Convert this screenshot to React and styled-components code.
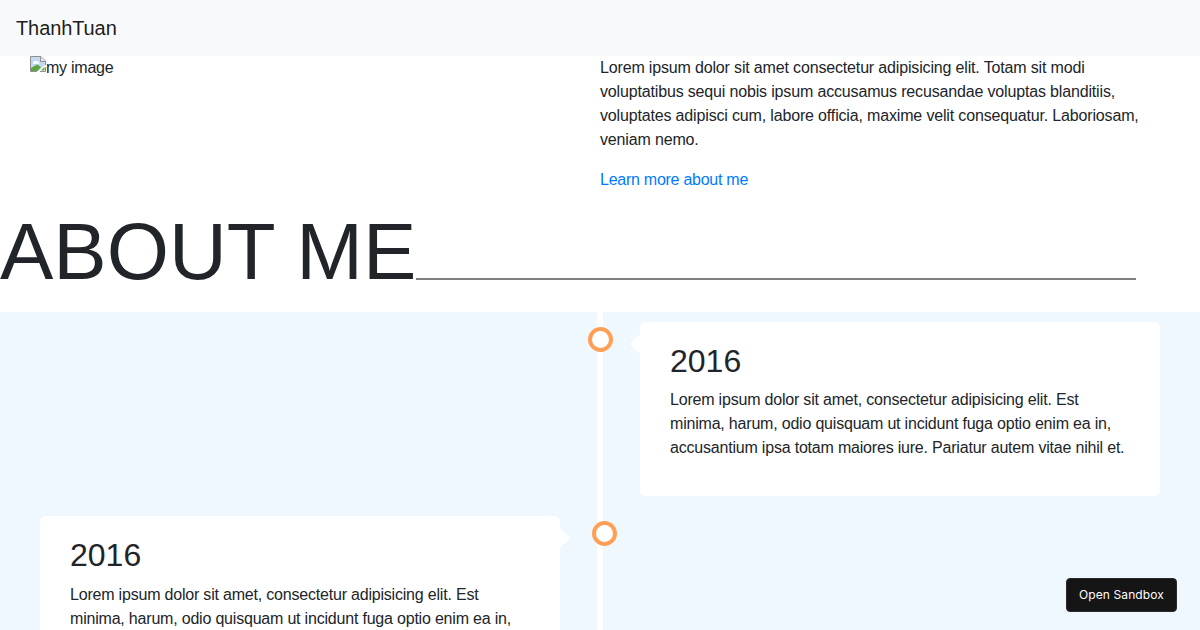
import React from 'react';
import styled, { createGlobalStyle } from 'styled-components';

const GlobalStyle = createGlobalStyle`
  *, *::before, *::after { box-sizing: border-box; }
  body {
    margin: 0;
    font-family: "Liberation Sans", Arial, sans-serif;
    font-size: 16px;
    line-height: 1.5;
    color: #212529;
    background: #fff;
  }
`

const Navbar = styled.nav`
  height: 56px;
  padding: 0 16px;
  display: flex;
  align-items: center;
  background: #f8f9fa;
`
const Brand = styled.a`
  font-size: 20px;
  letter-spacing: -0.1px;
  color: rgba(0, 0, 0, 0.9);
`
const IntroRow = styled.section`
  display: grid;
  grid-template-columns: 1fr 1fr;
`
const ImageCol = styled.div`
  padding-left: 30px;
`
const BrokenImage = styled.span`
  display: flex;
  align-items: flex-start;
  height: 24px;
  letter-spacing: -0.25px;

  svg {
    flex: none;
  }
`
const TextCol = styled.div`
  padding-right: 30px;
`
const Paragraph = styled.p`
  margin: 0 0 16px;
  letter-spacing: -0.16px;
`
const CardText = styled(Paragraph)`
  letter-spacing: -0.2px;
`
const LearnMore = styled.a`
  display: block;
  letter-spacing: -0.26px;
  color: #007bff;
`
const Heading = styled.h1`
  margin: 0;
  height: 120px;
  display: flex;
  align-items: center;
  font-size: 80px;
  font-weight: 400;
  line-height: 1.2;
  white-space: nowrap;

  &::after {
    content: '';
    width: 720px;
    height: 2px;
    margin-top: 54px;
    background: #7f7f7f;
  }
`
const Timeline = styled.section`
  position: relative;
  background: #f0f8ff;

  &::before {
    content: '';
    position: absolute;
    top: 0;
    bottom: 0;
    left: 597px;
    width: 6px;
    background: #fff;
  }
`
const Entry = styled.article`
  position: relative;
  width: 50%;
  padding: 10px 40px;
  margin-left: ${props => (props.$side === 'right' ? '50%' : '0')};

  &::before {
    content: '';
    position: absolute;
    top: 22px;
    width: 0;
    height: 0;
    border-style: solid;
    border-color: transparent;
    ${props => props.$side === 'right'
      ? 'left: 30px; border-width: 10px 10px 10px 0; border-right-color: #fff;'
      : 'right: 30px; border-width: 10px 0 10px 10px; border-left-color: #fff;'}
  }

  &::after {
    content: '';
    position: absolute;
    top: 15px;
    width: 25px;
    height: 25px;
    border: 4px solid #ff9f55;
    border-radius: 50%;
    background: #fff;
    z-index: 1;
    ${props => (props.$side === 'right' ? 'left: -12px;' : 'right: -17px;')}
  }
`
const Card = styled.div`
  padding: 20px 30px;
  background: #fff;
  border-radius: 6px;
`
const Year = styled.h2`
  margin: 0 0 8px;
  font-size: 32px;
  font-weight: 500;
  line-height: 1.2;
`
const SandboxButton = styled.a`
  position: fixed;
  right: 23px;
  bottom: 18px;
  width: 111px;
  height: 34px;
  display: flex;
  align-items: center;
  justify-content: center;
  background: #151515;
  border: 1px solid #2a2a2a;
  border-radius: 4px;
  color: #fff;
  font-family: Inter, sans-serif;
  font-size: 12px;
  font-weight: 400;
  letter-spacing: 0.1px;
`

const entries = [
  { side: 'right', year: '2016' },
  { side: 'left', year: '2016' },
]

const BrokenIcon = () => (
  <svg width="16" height="16" viewBox="0 0 16 16">
    <path d="M0.5 15.5V0.5H11L15.5 5V9" fill="#fff" stroke="#8f8f8f" />
    <path d="M1 1H10.5V5.5H15V9L8 15H1Z" fill="#c4d8f3" />
    <path d="M3 6.5Q5 3.5 7.5 5.5Q9.5 5.5 9.5 7.5L3 8Z" fill="#fff" />
    <path d="M1 15V12L7 8.5L11 11L7.5 15Z" fill="#5aa63c" />
    <path d="M7 15.5H0.5" stroke="#8f8f8f" />
    <path d="M10 15.5H15.5V11" fill="none" stroke="#8f8f8f" />
    <path d="M11 14.5L14.5 11V14.5Z" fill="#5aa63c" />
    <path d="M10.5 0.5V5.5H15.5" fill="#e8e8e8" stroke="#8f8f8f" />
  </svg>
)

const App = () => (
  <>
    <GlobalStyle />
    <Navbar>
      <Brand>ThanhTuan</Brand>
    </Navbar>
    <IntroRow>
      <ImageCol>
        <BrokenImage>
          <BrokenIcon />
          my image
        </BrokenImage>
      </ImageCol>
      <TextCol>
        <Paragraph>
          Lorem ipsum dolor sit amet consectetur adipisicing elit. Totam sit modi voluptatibus sequi
          nobis ipsum accusamus recusandae voluptas blanditiis, voluptates adipisci cum, labore
          officia, maxime velit consequatur. Laboriosam, veniam nemo.
        </Paragraph>
        <LearnMore>Learn more about me</LearnMore>
      </TextCol>
    </IntroRow>
    <Heading>ABOUT ME</Heading>
    <Timeline>
      {entries.map((entry, index) => (
        <Entry key={index} $side={entry.side}>
          <Card>
            <Year>{entry.year}</Year>
            <CardText>
              Lorem ipsum dolor sit amet, consectetur adipisicing elit. Est minima, harum, odio
              quisquam ut incidunt fuga optio enim ea in, accusantium ipsa totam maiores iure.
              Pariatur autem vitae nihil et.
            </CardText>
          </Card>
        </Entry>
      ))}
    </Timeline>
    <SandboxButton>Open Sandbox</SandboxButton>
  </>
)

export default App;
